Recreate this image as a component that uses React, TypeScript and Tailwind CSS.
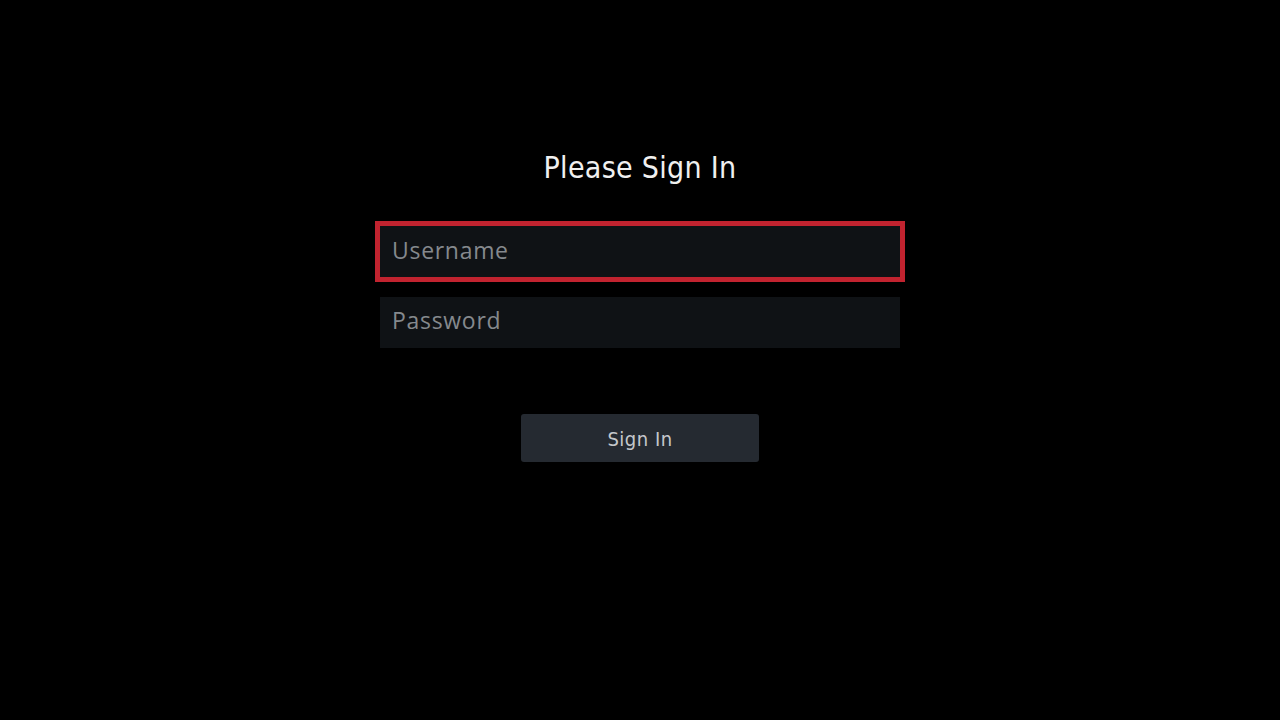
import React from "react";

export default function App() {
  return (
    <div className="w-[1280px] h-[720px] bg-black flex flex-col items-center">
      <h1 className="mt-[150px] text-[30px] leading-[36px] text-[#f0f0f0] tracking-[0.3px] font-['DejaVu_Sans_Condensed',sans-serif]">
        Please Sign In
      </h1>
      <div className="mt-[35px] w-[530px] h-[61px] border-[5px] border-[#c1232f] bg-[#0f1215] flex items-center px-[12px] pb-[3px]">
        <span className="text-[23px] tracking-[0.7px] text-[#85898d] font-['Open_Sans',sans-serif]">
          Username
        </span>
      </div>
      <div className="mt-[15px] w-[520px] h-[51px] bg-[#0f1215] flex items-center px-[12px] pb-[4px]">
        <span className="text-[23px] tracking-[0.7px] text-[#85898d] font-['Open_Sans',sans-serif]">
          Password
        </span>
      </div>
      <button className="mt-[66px] w-[238px] h-[48px] rounded-[3px] bg-[#252a31] text-[#c4c7cb] text-[20px] tracking-[0.5px] pt-[2px] font-['DejaVu_Sans_Condensed',sans-serif]">
        Sign In
      </button>
    </div>
  );
}
